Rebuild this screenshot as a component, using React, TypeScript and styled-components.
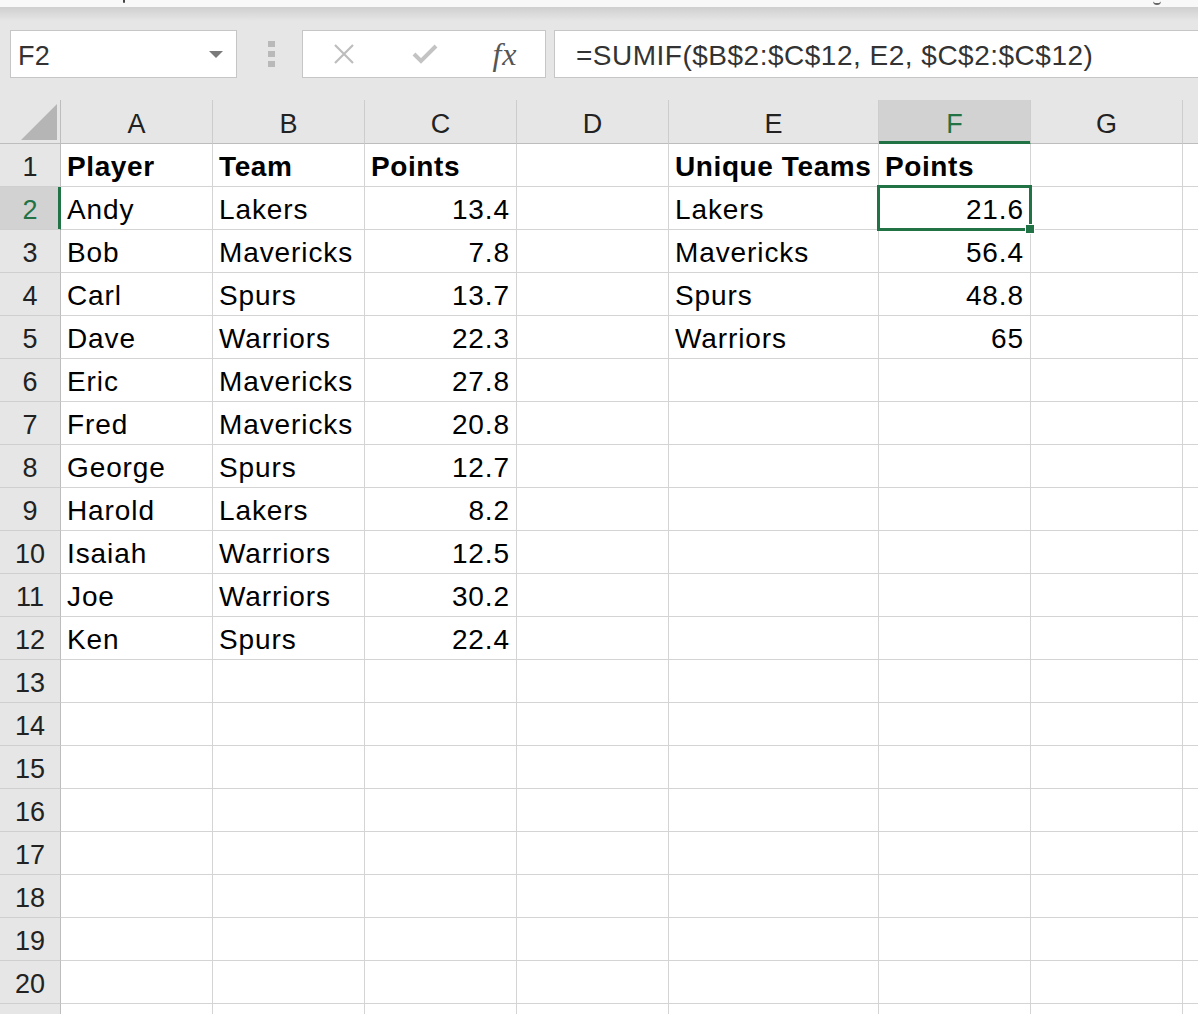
import styled, { createGlobalStyle } from 'styled-components';

const GlobalStyle = createGlobalStyle`
  html, body {
    margin: 0;
    padding: 0;
    background: #fff;
    overflow: hidden;
  }
  body {
    font-family: 'Liberation Sans', Arial, sans-serif;
  }
`;

const GREEN = '#217346';

const columns = [
    { key: 'A', width: 152 },
    { key: 'B', width: 152 },
    { key: 'C', width: 152 },
    { key: 'D', width: 152 },
    { key: 'E', width: 210 },
    { key: 'F', width: 152 },
    { key: 'G', width: 152 },
    { key: '', width: 152 },
];

const players = [
    ['Andy', 'Lakers', '13.4'],
    ['Bob', 'Mavericks', '7.8'],
    ['Carl', 'Spurs', '13.7'],
    ['Dave', 'Warriors', '22.3'],
    ['Eric', 'Mavericks', '27.8'],
    ['Fred', 'Mavericks', '20.8'],
    ['George', 'Spurs', '12.7'],
    ['Harold', 'Lakers', '8.2'],
    ['Isaiah', 'Warriors', '12.5'],
    ['Joe', 'Warriors', '30.2'],
    ['Ken', 'Spurs', '22.4'],
];

const summary = [
    ['Lakers', '21.6'],
    ['Mavericks', '56.4'],
    ['Spurs', '48.8'],
    ['Warriors', '65'],
];

interface CellData {
    text: string;
    right?: boolean;
    bold?: boolean;
}

const getCell = (row: number, col: string): CellData | null => {
    if (row === 1) {
        const heads: Record<string, string> = { A: 'Player', B: 'Team', C: 'Points', E: 'Unique Teams', F: 'Points' };
        return heads[col] ? { text: heads[col], bold: true } : null;
    }
    const p = players[row - 2];
    if (p) {
        if (col === 'A') return { text: p[0] };
        if (col === 'B') return { text: p[1] };
        if (col === 'C') return { text: p[2], right: true };
    }
    const s = summary[row - 2];
    if (s) {
        if (col === 'E') return { text: s[0] };
        if (col === 'F') return { text: s[1], right: true };
    }
    return null;
};

const App = () => {
    // row 21 only peeks in at the bottom edge, so it gets no label
    const rows = Array.from({ length: 21 }, (_, i) => i + 1);
    return (
        <Window>
            <GlobalStyle />
            <TopStrip>
                <Descender $left={123} />
                <Descender $left={1153} $wide />
            </TopStrip>
            <Shade />
            <FormulaBar>
                <NameBox>
                    <NameText>F2</NameText>
                    <DropArrow />
                </NameBox>
                <Grip>
                    <GripDot />
                    <GripDot />
                    <GripDot />
                </Grip>
                <ButtonsBox>
                    <IconSlot>
                        <svg width="24" height="20" viewBox="0 0 24 20">
                            <path d="M3 1 L21 19 M21 1 L3 19" stroke="#bdbdbd" strokeWidth="2.2" fill="none" />
                        </svg>
                    </IconSlot>
                    <IconSlot>
                        <svg width="26" height="20" viewBox="0 0 26 20">
                            <path d="M2 10 L9 17 L24 2" stroke="#c3c3c3" strokeWidth="4" fill="none" />
                        </svg>
                    </IconSlot>
                    <IconSlot>
                        <FxText>fx</FxText>
                    </IconSlot>
                </ButtonsBox>
                <FormulaInput>=SUMIF($B$2:$C$12, E2, $C$2:$C$12)</FormulaInput>
            </FormulaBar>
            <Sheet $template={`61px ${columns.map((c) => `${c.width}px`).join(' ')}`}>
                <Corner>
                    <svg width="36" height="36" viewBox="0 0 36 36">
                        <polygon points="36,0 36,36 0,36" fill="#b5b5b5" />
                    </svg>
                </Corner>
                {columns.map((c, i) => (
                    <ColHeader key={i} $active={c.key === 'F'}>
                        {c.key}
                    </ColHeader>
                ))}
                {rows.map((r) => (
                    <Row key={r} r={r} />
                ))}
            </Sheet>
        </Window>
    );
};

const Row = ({ r }: { r: number }) => (
    <>
        <RowHeader $active={r === 2}>{r <= 20 ? r : ''}</RowHeader>
        {columns.map((c, i) => {
            const d = getCell(r, c.key);
            const selected = r === 2 && c.key === 'F';
            return (
                <Cell key={i} $right={d?.right} $bold={d?.bold}>
                    {d?.text}
                    {selected && (
                        <Selection>
                            <FillHandle />
                        </Selection>
                    )}
                </Cell>
            );
        })}
    </>
);

const Window = styled.div`
    width: 1198px;
    height: 1014px;
    overflow: hidden;
    background: #e6e6e6;
    display: flex;
    flex-direction: column;
`;

const TopStrip = styled.div`
    height: 7px;
    flex-shrink: 0;
    background: #f8f8f8;
    display: flex;
    align-items: flex-start;
`;

const Descender = styled.span<{ $left: number; $wide?: boolean }>`
    position: absolute;
    top: 0;
    left: ${(p) => p.$left}px;
    width: ${(p) => (p.$wide ? 8 : 2)}px;
    height: 3px;
    border-bottom: ${(p) => (p.$wide ? '2px solid #666' : 'none')};
    border-radius: 0 0 4px 4px;
    background: ${(p) => (p.$wide ? 'transparent' : '#444')};
`;

const Shade = styled.div`
    height: 14px;
    flex-shrink: 0;
    background: linear-gradient(#cfcfcf, #e6e6e6);
`;

const FormulaBar = styled.div`
    display: flex;
    align-items: center;
    height: 48px;
    padding: 9px 0 22px 10px;
    flex-shrink: 0;
`;

const NameBox = styled.div`
    box-sizing: border-box;
    width: 227px;
    height: 48px;
    background: #fff;
    border: 1px solid #c6c6c6;
    display: flex;
    align-items: center;
    justify-content: space-between;
    padding: 0 13px 0 7px;
`;

const NameText = styled.span`
    font-size: 27px;
    color: #333;
    letter-spacing: 0.3px;
    padding-top: 4px;
`;

const DropArrow = styled.span`
    width: 0;
    height: 0;
    border-left: 7px solid transparent;
    border-right: 7px solid transparent;
    border-top: 7px solid #7a7a7a;
`;

const Grip = styled.div`
    display: flex;
    flex-direction: column;
    gap: 4px;
    margin: 0 27px 0 31px;
`;

const GripDot = styled.span`
    width: 7px;
    height: 6px;
    background: #b9b9b9;
`;

const ButtonsBox = styled.div`
    box-sizing: border-box;
    width: 244px;
    height: 48px;
    background: #fff;
    border: 1px solid #c6c6c6;
    display: grid;
    grid-template-columns: 82px 80px 80px;
    align-items: center;
`;

const IconSlot = styled.div`
    display: flex;
    justify-content: center;
    align-items: center;
`;

const FxText = styled.span`
    font-family: 'Liberation Serif', 'Times New Roman', serif;
    font-style: italic;
    font-size: 32px;
    color: #555;
    letter-spacing: 1px;
`;

const FormulaInput = styled.div`
    box-sizing: border-box;
    flex: 1;
    height: 48px;
    margin-left: 8px;
    background: #fff;
    border: 1px solid #c6c6c6;
    border-right: none;
    display: flex;
    align-items: center;
    padding: 4px 0 0 21px;
    font-size: 28px;
    color: #333;
    letter-spacing: 0.5px;
    white-space: nowrap;
`;

const Sheet = styled.div<{ $template: string }>`
    flex: 1;
    background: #fff;
    display: grid;
    grid-template-columns: ${(p) => p.$template};
    grid-template-rows: 44px;
    grid-auto-rows: 43px;
    align-content: start;
`;

const HeaderBase = styled.div`
    box-sizing: border-box;
    background: #e6e6e6;
    color: #222;
    font-size: 27px;
    text-align: center;
`;

const Corner = styled(HeaderBase)`
    border-right: 1px solid #bdbdbd;
    border-bottom: 1px solid #bdbdbd;
    display: flex;
    justify-content: flex-end;
    align-items: flex-end;
    padding: 0 3px 3px 0;
`;

const ColHeader = styled(HeaderBase)<{ $active?: boolean }>`
    border-right: 1px solid #cdcdcd;
    border-bottom: 1px solid ${(p) => (p.$active ? GREEN : '#bdbdbd')};
    line-height: 38px;
    padding-top: 5px;
    background: ${(p) => (p.$active ? '#d2d2d2' : '#e6e6e6')};
    color: ${(p) => (p.$active ? GREEN : '#222')};
    box-shadow: ${(p) => (p.$active ? `inset 0 -2px 0 ${GREEN}` : 'none')};
`;

const RowHeader = styled(HeaderBase)<{ $active?: boolean }>`
    border-right: 1px solid ${(p) => (p.$active ? GREEN : '#bdbdbd')};
    border-bottom: 1px solid #cfcfcf;
    line-height: 38px;
    padding-top: 4px;
    background: ${(p) => (p.$active ? '#d2d2d2' : '#e6e6e6')};
    color: ${(p) => (p.$active ? GREEN : '#222')};
    box-shadow: ${(p) => (p.$active ? `inset -2px 0 0 ${GREEN}` : 'none')};
`;

const Cell = styled.div<{ $right?: boolean; $bold?: boolean }>`
    position: relative;
    box-sizing: border-box;
    border-right: 1px solid #d4d4d4;
    border-bottom: 1px solid #d4d4d4;
    font-size: 28px;
    line-height: 38px;
    padding: 4px 6px 0 6px;
    letter-spacing: ${(p) => (p.$bold ? '0.6px' : '0.9px')};
    color: #000;
    white-space: nowrap;
    text-align: ${(p) => (p.$right ? 'right' : 'left')};
    font-weight: ${(p) => (p.$bold ? 700 : 400)};
`;

const Selection = styled.div`
    position: absolute;
    top: -2px;
    left: -2px;
    right: -2px;
    bottom: -2px;
    border: 3px solid ${GREEN};
    z-index: 2;
    pointer-events: none;
`;

const FillHandle = styled.span`
    position: absolute;
    right: -6px;
    bottom: -6px;
    width: 8px;
    height: 8px;
    background: ${GREEN};
    border: 1px solid #fff;
`;

export default App;
